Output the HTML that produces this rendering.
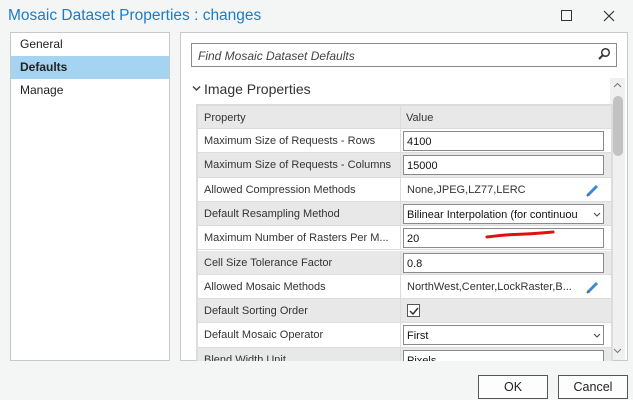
<!DOCTYPE html>
<html><head><style>
*{box-sizing:border-box;margin:0;padding:0}
body{width:633px;height:400px;background:#f4f6f6;font-family:"Liberation Sans",sans-serif;position:relative;overflow:hidden;color:#222}
.abs{position:absolute}
.title{left:8px;top:7px;font-size:15.5px;color:#1e7bc4}
.left{left:10px;top:32px;width:160px;height:329px;background:#fff;border:1px solid #c8c8c8}
.left div{height:23px;line-height:23px;padding-left:9px;font-size:12px}
.right{left:180px;top:32px;width:448px;height:329px;background:#fff;border:1px solid #c8c8c8;overflow:hidden}
.search{left:191px;top:43px;width:426px;height:24px;border:1px solid #8a8a8a;background:#fff;font-style:italic;font-size:12px;color:#444;padding:5px 0 0 6px}
.tbl{left:196px;top:104px;width:417px;height:257px;border:2px solid #dcdcdc;border-bottom:none;overflow:hidden;background:#fff}
.row{position:absolute;left:0;width:413px;height:24.3px;border-bottom:1px solid #dcdcdc;font-size:11px;color:#333}
.row.g{background:#e8e8e8}
.row .p{position:absolute;left:6px;top:6px}
.row .sep{position:absolute;left:202px;top:0;bottom:0;width:1px;background:#dcdcdc}
.inp{position:absolute;left:205px;top:2px;width:201px;height:20px;border:1px solid #8a8a8a;background:#fff;padding:4px 0 0 3px;font-size:11px;color:#111;white-space:nowrap;overflow:hidden}
.txt{position:absolute;left:209px;top:6px;font-size:11px;color:#333}
.btn{top:375px;height:24px;border:1px solid #555;background:#fdfdfd;font-size:12.5px;text-align:center;line-height:22px}
</style></head><body>
<div class="abs title">Mosaic Dataset Properties : changes</div>
<div class="abs" style="left:561px;top:10px;width:11px;height:11px;border:1px solid #333"></div>
<svg class="abs" style="left:603px;top:10px" width="12" height="12"><path d="M1 1L11 11M11 1L1 11" stroke="#333" stroke-width="1.2"/></svg>
<div class="abs left">
<div>General</div>
<div style="background:#a5d4f2;font-weight:bold">Defaults</div>
<div>Manage</div>
</div>
<div class="abs right"></div>
<div class="abs search">Find Mosaic Dataset Defaults</div>
<svg class="abs" style="left:597px;top:47px" width="14" height="14"><circle cx="8.5" cy="5.5" r="3.8" stroke="#333" stroke-width="1.5" fill="none"/><path d="M5.8 8.2L2 12" stroke="#333" stroke-width="2"/></svg>
<svg class="abs" style="left:192px;top:85px" width="9" height="7"><path d="M1 1.5L4.5 5L8 1.5" stroke="#444" stroke-width="1.5" fill="none"/></svg>
<div class="abs" style="left:204px;top:81px;font-size:14px;color:#333">Image Properties</div>
<div class="abs" style="left:610px;top:78px;width:15px;height:282px;background:#f0f0f0"></div>
<svg class="abs" style="left:613px;top:82px" width="9" height="6"><path d="M1 5L4.5 1.5L8 5" stroke="#777" fill="none"/></svg>
<div class="abs" style="left:613px;top:96px;width:10px;height:60px;background:#c2c2c2;border-radius:5px"></div>
<svg class="abs" style="left:613px;top:348px" width="9" height="6"><path d="M1 1L4.5 4.5L8 1" stroke="#777" fill="none"/></svg>
<div class="abs tbl">
<div class="row g" style="top:0;height:23px"><span class="p">Property</span><span class="sep"></span><span class="txt" style="left:208px">Value</span></div>
<div class="row" style="top:23px"><span class="p">Maximum Size of Requests - Rows</span><span class="sep"></span><div class="inp">4100</div></div>
<div class="row g" style="top:47.3px"><span class="p">Maximum Size of Requests - Columns</span><span class="sep"></span><div class="inp">15000</div></div>
<div class="row" style="top:71.6px"><span class="p">Allowed Compression Methods</span><span class="sep"></span><span class="txt">None,JPEG,LZ77,LERC</span><svg style="position:absolute;left:388px;top:5px" width="14" height="14"><path d="M2 12L11 3" stroke="#3b8ad8" stroke-width="3"/><path d="M1 13L3 11" stroke="#666" stroke-width="2"/></svg></div>
<div class="row g" style="top:95.9px"><span class="p">Default Resampling Method</span><span class="sep"></span><div class="inp">Bilinear Interpolation (for continuou</div><svg style="position:absolute;left:395px;top:10px" width="8" height="5"><path d="M1 1L4 4L7 1" stroke="#444" fill="none"/></svg></div>
<div class="row" style="top:120.2px"><span class="p">Maximum Number of Rasters Per M...</span><span class="sep"></span><div class="inp">20</div></div>
<div class="row g" style="top:144.5px"><span class="p">Cell Size Tolerance Factor</span><span class="sep"></span><div class="inp">0.8</div></div>
<div class="row" style="top:168.8px"><span class="p">Allowed Mosaic Methods</span><span class="sep"></span><span class="txt">NorthWest,Center,LockRaster,B...</span><svg style="position:absolute;left:388px;top:5px" width="14" height="14"><path d="M2 12L11 3" stroke="#3b8ad8" stroke-width="3"/><path d="M1 13L3 11" stroke="#666" stroke-width="2"/></svg></div>
<div class="row g" style="top:193.1px"><span class="p">Default Sorting Order</span><span class="sep"></span><div style="position:absolute;left:209px;top:5px;width:13px;height:13px;border:1px solid #555;background:#fff"></div><svg style="position:absolute;left:210px;top:6px" width="12" height="12"><path d="M2 6L5 9L10 3" stroke="#333" stroke-width="1.5" fill="none"/></svg></div>
<div class="row" style="top:217.4px"><span class="p">Default Mosaic Operator</span><span class="sep"></span><div class="inp">First</div><svg style="position:absolute;left:395px;top:10px" width="8" height="5"><path d="M1 1L4 4L7 1" stroke="#444" fill="none"/></svg></div>
<div class="row g" style="top:241.7px"><span class="p">Blend Width Unit</span><span class="sep"></span><div class="inp">Pixels</div></div>
</div>
<svg class="abs" style="left:484px;top:228px" width="72" height="12"><path d="M3 9C12 8 18 7 30 6.5C45 6 58 5 69 4" stroke="#e01010" stroke-width="3" fill="none" stroke-linecap="round"/></svg>
<div class="abs" style="left:0;top:361px;width:633px;height:39px;background:#f4f6f6"></div>
<div class="abs btn" style="left:478px;width:70px">OK</div>
<div class="abs btn" style="left:558px;width:70px">Cancel</div>
</body></html>
